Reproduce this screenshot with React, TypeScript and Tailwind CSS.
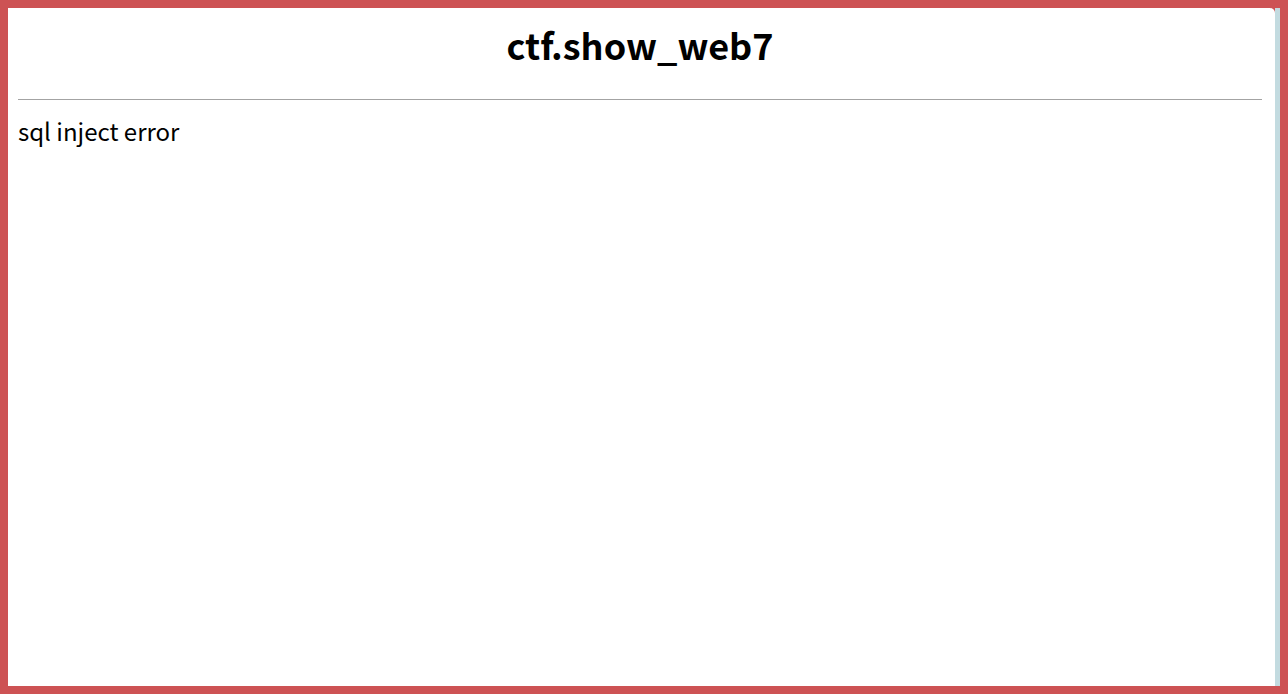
import React from 'react';

export default function App() {
  return (
    <div className="flex h-screen w-full bg-[#cd5254] p-2">
      <div className="flex flex-1">
        <main
          className="flex-1 rounded-tr-[5px] bg-white pl-[10px] pr-[13px] pt-[12px] text-black"
          style={{ fontFamily: '"Noto Sans CJK SC", "Noto Sans", sans-serif' }}
        >
          <h1 className="text-center text-[36px] font-bold leading-[48px]">ctf.show_web7</h1>
          <hr className="mt-[31px] border-0 border-t border-[#a3a3a3]" />
          <p className="mt-[15px] text-[24px] leading-[32px]">sql inject error</p>
        </main>
        <div className="w-[5px] bg-[#c3dbe0]" />
      </div>
    </div>
  );
}
